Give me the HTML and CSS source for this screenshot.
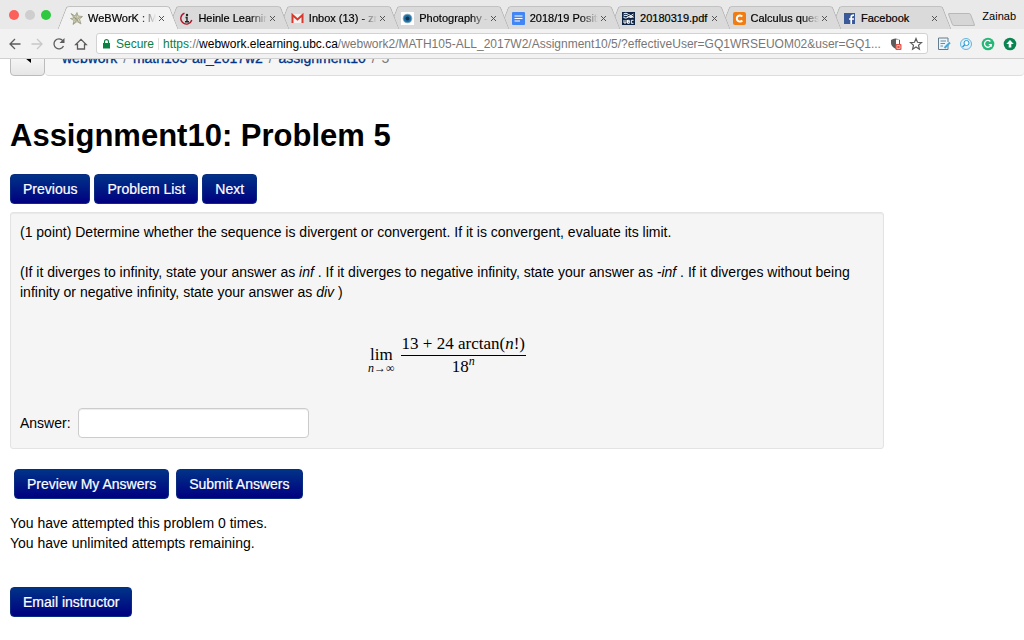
FILE: index.html
```
<!DOCTYPE html>
<html lang="en">
<head>
	<meta charset="UTF-8">
	<meta name="viewport" content="width=device-width, initial-scale=1">
	<title>WeBWorK : MATH105 : Assignment10 : 5</title>
	<link rel="stylesheet" href="styles.css">
</head>
<body>
	<!-- Browser window -->
	<header class="browser">
		<div class="tabstrip">
			<div class="lights">
				<span class="light red"></span>
				<span class="light grey"></span>
				<span class="light green"></span>
			</div>
			<div class="tabs">
				<div class="tab active">
					<svg class="favicon" viewBox="0 0 13 13"><path d="M1 1.500L5 4 7 .5 8 4 12.500 4.500 9.500 7 11 12 7 9.500 3 12.500 4 8.500 .5 6.500 4 6Z" fill="#d9d6b4" stroke="#9a9a85" stroke-width=".8"/><path d="M2 2L8 9M7 2L5 9M12 5L4 7M10 11L4 5M3 12L9 6" stroke="#8a8a7c" stroke-width=".5"/></svg>
					<span class="tab-title">WeBWorK : MATH</span>
					<button class="close" aria-label="Close tab"><svg viewBox="0 0 7 7"><path d="M1 1L6 6M6 1L1 6"/></svg></button>
				</div>
				<div class="tab">
					<svg class="favicon" viewBox="0 0 13 13"><path d="M4.500 1.200A5.600 5.600 0 1 0 11.800 8" fill="none" stroke="#b5132b" stroke-width="1.400"/><path d="M5.500 5.500H7V9.500M5 9.800H9" fill="none" stroke="#222" stroke-width="1.400"/><circle cx="7" cy="3" r="1.200" fill="#222"/></svg>
					<span class="tab-title">Heinle Learning</span>
					<button class="close" aria-label="Close tab"><svg viewBox="0 0 7 7"><path d="M1 1L6 6M6 1L1 6"/></svg></button>
				</div>
				<div class="tab">
					<svg class="favicon" viewBox="0 0 13 13"><path d="M1 2H12V11H1Z" fill="#f4f1f0"/><path d="M1.500 11V3L6.500 7.500 11.500 3V11" fill="none" stroke="#d63a2f" stroke-width="2"/></svg>
					<span class="tab-title">Inbox (13) - znba</span>
					<button class="close" aria-label="Close tab"><svg viewBox="0 0 7 7"><path d="M1 1L6 6M6 1L1 6"/></svg></button>
				</div>
				<div class="tab">
					<svg class="favicon" viewBox="0 0 13 13"><path d="M0 0H13V13H0Z" fill="#fff"/><circle cx="6.500" cy="6.500" r="4.800" fill="#83a9bd"/><circle cx="6.500" cy="6.500" r="3.800" fill="#1e70a6"/><circle cx="6.500" cy="6.500" r="2" fill="#14324a"/></svg>
					<span class="tab-title">Photography – G</span>
					<button class="close" aria-label="Close tab"><svg viewBox="0 0 7 7"><path d="M1 1L6 6M6 1L1 6"/></svg></button>
				</div>
				<div class="tab">
					<svg class="favicon" viewBox="0 0 13 13"><rect width="13" height="13" rx="1" fill="#4285f4"/><path d="M2.500 4H10.500M2.500 6.500H10.500M2.500 9H8" stroke="#fff" stroke-width="1.200"/></svg>
					<span class="tab-title">2018/19 Position</span>
					<button class="close" aria-label="Close tab"><svg viewBox="0 0 7 7"><path d="M1 1L6 6M6 1L1 6"/></svg></button>
				</div>
				<div class="tab">
					<svg class="favicon" viewBox="0 0 13 13"><path d="M0 0H13V13H0Z" fill="#0c2344"/><path d="M1.500 2Q4 0 6.500 2.500T11.500 2M1.500 4Q4 2 6.500 4.500T11.500 4M1.500 5.500Q4 7 6.500 5T11.500 5.500M2 8V11H4V8M5.500 8V11.300H7.300V8.300H5.500M5.500 9.700H7.500M11.500 8.300H9.300V11.300H11.500" fill="none" stroke="#fff"/></svg>
					<span class="tab-title">20180319.pdf</span>
					<button class="close" aria-label="Close tab"><svg viewBox="0 0 7 7"><path d="M1 1L6 6M6 1L1 6"/></svg></button>
				</div>
				<div class="tab">
					<svg class="favicon" viewBox="0 0 13 13"><rect width="13" height="13" rx="2" fill="#f07c12"/><path d="M9.300 4.500A3.100 3.100 0 1 0 9.300 8.500" fill="none" stroke="#fff" stroke-width="2"/></svg>
					<span class="tab-title">Calculus questio</span>
					<button class="close" aria-label="Close tab"><svg viewBox="0 0 7 7"><path d="M1 1L6 6M6 1L1 6"/></svg></button>
				</div>
				<div class="tab">
					<svg class="favicon" viewBox="0 0 13 13"><path d="M1 1H12V12H1Z" fill="#3b5998"/><path d="M8.200 12V5Q8.200 3.200 11 3.200M6 7H11" fill="none" stroke="#fff" stroke-width="1.700"/></svg>
					<span class="tab-title">Facebook</span>
					<button class="close" aria-label="Close tab"><svg viewBox="0 0 7 7"><path d="M1 1L6 6M6 1L1 6"/></svg></button>
				</div>
			</div>
			<button class="new-tab" aria-label="New tab"></button>
			<span class="profile">Zainab</span>
		</div>
		<div class="toolbar">
			<nav class="nav-buttons">
				<button class="tool" aria-label="Back"><svg viewBox="0 0 14 14"><path d="M12.500 7H2M7 2L2 7 7 12"/></svg></button>
				<button class="tool" aria-label="Forward" disabled><svg viewBox="0 0 14 14"><path d="M1.500 7H12M7 2L12 7 7 12"/></svg></button>
				<button class="tool" aria-label="Reload"><svg viewBox="0 0 14 14"><path d="M11.500 9A5 5 0 1 1 10.800 3.600"/><path class="solid" d="M12.500 1V6H7.500Z"/></svg></button>
				<button class="tool" aria-label="Home"><svg viewBox="0 0 14 14"><path d="M1.800 7.500L7 2.300 12.200 7.500H10.500V12H3.500V7.500Z"/></svg></button>
			</nav>
			<div class="address">
				<svg class="lock" viewBox="0 0 7 10"><path d="M0 4H7V9.500H0Z" fill="#0b8043"/><path d="M1.500 4V2.700A2 2 0 0 1 5.500 2.700V4" fill="none" stroke="#0b8043" stroke-width="1.200"/></svg>
				<span class="secure">Secure</span>
				<span class="url"><span class="scheme">https</span>://<span class="host">webwork.elearning.ubc.ca</span>/webwork2/MATH105-ALL_2017W2/Assignment10/5/?effectiveUser=GQ1WRSEUOM02&amp;user=GQ1...</span>
				<svg class="address-icon" viewBox="0 0 14 14"><path d="M6.500 1.500Q9 1.500 11 3V7H7V12Q2 9.500 2 6V3Q4 1.500 6.500 1.500Z" fill="#5c5c5c"/><path d="M7 2.500H10V7H7Z" fill="#fff"/><rect x="6.500" y="7" width="6" height="6" rx="1" fill="#e05144"/><path d="M8 8.500H11V11.500H8Z" fill="none" stroke="#f6c9c4" stroke-width=".8"/></svg>
				<svg class="address-icon" viewBox="0 0 14 14"><path d="M7 1.500L8.500 5.300 12.500 5.600 9.500 8.200 10.400 12.200 7 10 3.600 12.200 4.500 8.200 1.500 5.600 5.500 5.300Z" fill="none" stroke="#5c5c5c" stroke-width="1.200"/></svg>
			</div>
			<div class="extensions">
				<svg viewBox="0 0 14 14"><path d="M11 8V12.500H1.500V1H11V5" fill="#eaf4fb" stroke="#647c8c"/><path d="M3.500 4H9M3.500 6.500H8M3.500 9H6" stroke="#708b9b"/><path d="M7.500 11L13 5.500" stroke="#3cabdf" stroke-width="2"/></svg>
				<svg viewBox="0 0 14 14"><circle cx="7" cy="7" r="5.500" fill="#e1f0f9" stroke="#67b4dd"/><circle cx="7.500" cy="6" r="2.500" fill="#fff" stroke="#279bd4"/><path d="M5.700 7.800L3.500 10" stroke="#279bd4" stroke-width="1.400"/></svg>
				<svg viewBox="0 0 14 14"><circle cx="7" cy="7" r="6.300" fill="#27b879"/><path d="M9.400 4.500A3.400 3.400 0 1 0 10.200 7.700H7.800M10.200 7.500V9.800" fill="none" stroke="#fff" stroke-width="1.300"/></svg>
				<svg viewBox="0 0 14 14"><circle cx="7" cy="7" r="6.300" fill="#098450"/><path d="M7 3L10.700 7H8.300V10.500H5.700V7H3.300Z" fill="#fff"/></svg>
			</div>
		</div>
	</header>

	<!-- Problem page, scrolled a bit below its breadcrumb -->
	<main class="page">
		<div class="topbar">
			<button class="back" aria-label="Toggle menu"><svg viewBox="0 0 8 10"><path d="M7 0V10L1 5Z"/></svg></button>
			<nav class="breadcrumb"><a href="#">webwork</a> <span class="divider">/</span> <a href="#">math105-all_2017w2</a> <span class="divider">/</span> <a href="#">assignment10</a> <span class="divider">/</span> 5</nav>
		</div>
		<h1>Assignment10: Problem 5</h1>
		<div class="problem-nav">
			<button class="btn">Previous</button>
			<button class="btn">Problem List</button>
			<button class="btn">Next</button>
		</div>
		<form onsubmit="return false">
			<section class="problem">
				<p>(1 point) Determine whether the sequence is divergent or convergent. If it is convergent, evaluate its limit.</p>
				<p>(If it diverges to infinity, state your answer as <i>inf</i> . If it diverges to negative infinity, state your answer as <i>-inf</i> . If it diverges without being infinity or negative infinity, state your answer as <i>div</i> )</p>
				<div class="formula">
					<div class="limit">
						<span>lim</span>
						<span class="under"><i>n</i>→∞</span>
					</div>
					<div class="fraction">
						<span class="top">13 + 24 arctan(<i>n</i>!)</span>
						<span class="bottom">18<sup><i>n</i></sup></span>
					</div>
				</div>
				<div class="answer">
					<label for="answer">Answer:</label>
					<input id="answer" type="text">
				</div>
			</section>
			<div class="submit-row">
				<button class="btn">Preview My Answers</button>
				<button class="btn">Submit Answers</button>
			</div>
		</form>
		<p class="attempts">You have attempted this problem 0 times.<br>You have unlimited attempts remaining.</p>
		<button class="btn">Email instructor</button>
	</main>
</body>
</html>
```
FILE: styles.css
```
* {
	box-sizing: border-box;
}
html {
	height: 100%;
	overflow: hidden;
}
body {
	margin: 0;
	min-height: 100%;
	background: #fff;
	color: #000;
	font-family: "Liberation Sans", Helvetica, Arial, sans-serif;
	font-size: 14px;
	line-height: 20px;
}
button,
input {
	font: inherit;
}
svg {
	display: block;
	flex: none;
}

/* tab strip */
.tabstrip {
	display: flex;
	height: 29px;
	padding-top: 6px;
	background: #e9e9e9;
}
.lights {
	display: flex;
	gap: 6px;
	width: 62px;
	padding: 4px 0 0 9px;
	flex: none;
}
.light {
	width: 10px;
	height: 10px;
	border-radius: 50%;
}
.red {
	background: #fc605b;
}
.grey {
	background: #cecece;
}
.green {
	background: #2fc840;
}
.tabs {
	display: flex;
	flex: 1;
	min-width: 0;
}
.tab {
	position: relative;
	z-index: 1;
	display: flex;
	align-items: center;
	flex: 1;
	min-width: 0;
	padding: 1px 0 0 8px;
	font-size: 11px;
	line-height: 14px;
}
/* each tab is two slanted halves, left and right */
.tab::before,
.tab::after {
	content: "";
	position: absolute;
	z-index: -1;
	top: 0;
	bottom: 0;
	background: #dadada;
	border-top: 1px solid #c2c2c2;
}
.tab::before {
	left: 0;
	right: 50%;
	border-left: 1px solid #b2b2b2;
	border-top-left-radius: 3px;
	transform: skewX(-21deg);
}
.tab::after {
	left: 40%;
	right: -2px;
	border-right: 1px solid #b2b2b2;
	border-top-right-radius: 3px;
	transform: skewX(21deg);
}
.tab:nth-child(1) { z-index: 8; }
.tab:nth-child(2) { z-index: 7; }
.tab:nth-child(3) { z-index: 6; }
.tab:nth-child(4) { z-index: 5; }
.tab:nth-child(5) { z-index: 4; }
.tab:nth-child(6) { z-index: 3; }
.tab:nth-child(7) { z-index: 2; }
.tab.active::before,
.tab.active::after {
	background: #f2f2f2;
}
.favicon {
	width: 13px;
	height: 13px;
}
.tab-title {
	flex: 1;
	min-width: 0;
	margin-left: 5px;
	overflow: hidden;
	white-space: nowrap;
	-webkit-text-stroke: 0.2px;
	-webkit-mask-image: linear-gradient(to right, #000 75%, transparent);
	mask-image: linear-gradient(to right, #000 75%, transparent);
}
.tab:last-child .tab-title,
.tab:nth-child(6) .tab-title {
	-webkit-mask-image: none;
	mask-image: none;
}
.close {
	margin: 0 7px 0 2px;
	padding: 0;
	border: 0;
	background: none;
}
.close svg {
	width: 7px;
	height: 7px;
	stroke: #555;
}
.new-tab {
	width: 23px;
	height: 13px;
	margin: 7px 9px 0 5px;
	padding: 0;
	flex: none;
	border: 1px solid #b8b8b8;
	border-radius: 2px;
	background: #d6d6d6;
	transform: skewX(21deg);
}
.profile {
	margin-right: 8px;
	font-size: 11px;
	line-height: 20px;
}

/* address bar */
.toolbar {
	display: flex;
	align-items: center;
	height: 30px;
	padding-right: 7px;
	background: #f2f2f2;
	border-bottom: 1px solid #d0d0d0;
}
.nav-buttons {
	display: flex;
	gap: 8px;
	padding: 0 8px;
}
.tool {
	padding: 0;
	border: 0;
	background: none;
}
.tool svg {
	width: 14px;
	height: 14px;
	fill: none;
	stroke: #5c5c5c;
	stroke-width: 1.3;
}
.tool .solid {
	fill: #5c5c5c;
	stroke: none;
}
.tool:disabled svg {
	stroke: #c8c8c8;
}
.address {
	display: flex;
	align-items: center;
	flex: 1;
	min-width: 0;
	height: 21px;
	padding: 0 4px 0 6px;
	background: #fff;
	border: 1px solid #d2d2d2;
	border-radius: 3px;
	font-size: 12px;
	line-height: 18px;
}
.lock {
	width: 7px;
	height: 10px;
}
.secure {
	margin-left: 6px;
	padding-right: 4px;
	border-right: 1px solid #ddd;
	color: #0b8043;
	line-height: 12px;
}
.url {
	flex: 1;
	min-width: 0;
	margin-left: 4px;
	overflow: hidden;
	white-space: nowrap;
	color: #777;
}
.scheme {
	color: #0b8043;
}
.host {
	color: #000;
}
.address-icon {
	width: 14px;
	height: 14px;
	margin-left: 6px;
}
.extensions {
	display: flex;
	gap: 8px;
	margin-left: 9px;
}
.extensions svg {
	width: 14px;
	height: 14px;
}

/* page */
.page {
	padding: 0 0 0 10px;
}
.topbar {
	display: flex;
	align-items: flex-end;
	height: 17px;
	overflow: hidden;
}
.back {
	display: flex;
	justify-content: center;
	align-items: flex-end;
	width: 35px;
	height: 30px;
	padding: 0 0 12px;
	border: 1px solid #bbb;
	border-radius: 4px;
	background: linear-gradient(#fff, #e6e6e6);
}
.back svg {
	width: 8px;
	height: 10px;
}
.breadcrumb {
	flex: 1;
	height: 36px;
	padding: 8px 15px 7px 17px;
	background: #f5f5f5;
	border-bottom: 1px solid #ddd;
	border-radius: 4px;
	color: #777;
}
.breadcrumb a {
	color: #003388;
	text-decoration: none;
	-webkit-text-stroke: 0.3px;
}
.divider {
	padding: 0 2px;
}
h1 {
	margin: 40px 0 18px;
	font-size: 31px;
	line-height: 40px;
}
.btn {
	height: 30px;
	padding: 0 12px;
	border: 1px solid #0a2c80;
	border-radius: 4px;
	background: linear-gradient(#003388, #000080);
	color: #fff;
	line-height: 20px;
	-webkit-text-stroke: 0.2px;
}
.problem-nav {
	display: flex;
	gap: 4px;
}
.problem {
	width: 874px;
	max-width: 100%;
	margin-top: 8px;
	padding: 9px;
	background: #f5f5f5;
	border: 1px solid #e3e3e3;
	border-radius: 3px;
	box-shadow: inset 0 1px 1px rgba(0, 0, 0, 0.05);
}
.problem p {
	margin: 0 0 20px;
}
.formula {
	display: flex;
	justify-content: center;
	gap: 6px;
	padding-top: 11px;
	font-family: "Liberation Serif", "Times New Roman", serif;
	font-size: 17px;
}
.limit,
.fraction {
	display: flex;
	flex-direction: column;
	align-items: center;
}
.limit {
	padding-top: 12px;
}
.under {
	font-size: 12px;
	line-height: 6px;
}
.top {
	padding: 0 1px;
	border-bottom: 1px solid #000;
	line-height: 22px;
}
.bottom {
	line-height: 22px;
}
sup {
	font-size: 12px;
	line-height: 0;
}
.answer {
	display: flex;
	align-items: center;
	gap: 7px;
	padding: 30px 0 1px;
}
.answer input {
	width: 231px;
	height: 30px;
	padding: 4px 6px;
	border: 1px solid #ccc;
	border-radius: 4px;
	background: #fff;
	box-shadow: inset 0 1px 1px rgba(0, 0, 0, 0.075);
}
.submit-row {
	display: flex;
	gap: 7px;
	padding: 20px 4px 0;
}
.attempts {
	margin: 14px 0 34px;
}
```
